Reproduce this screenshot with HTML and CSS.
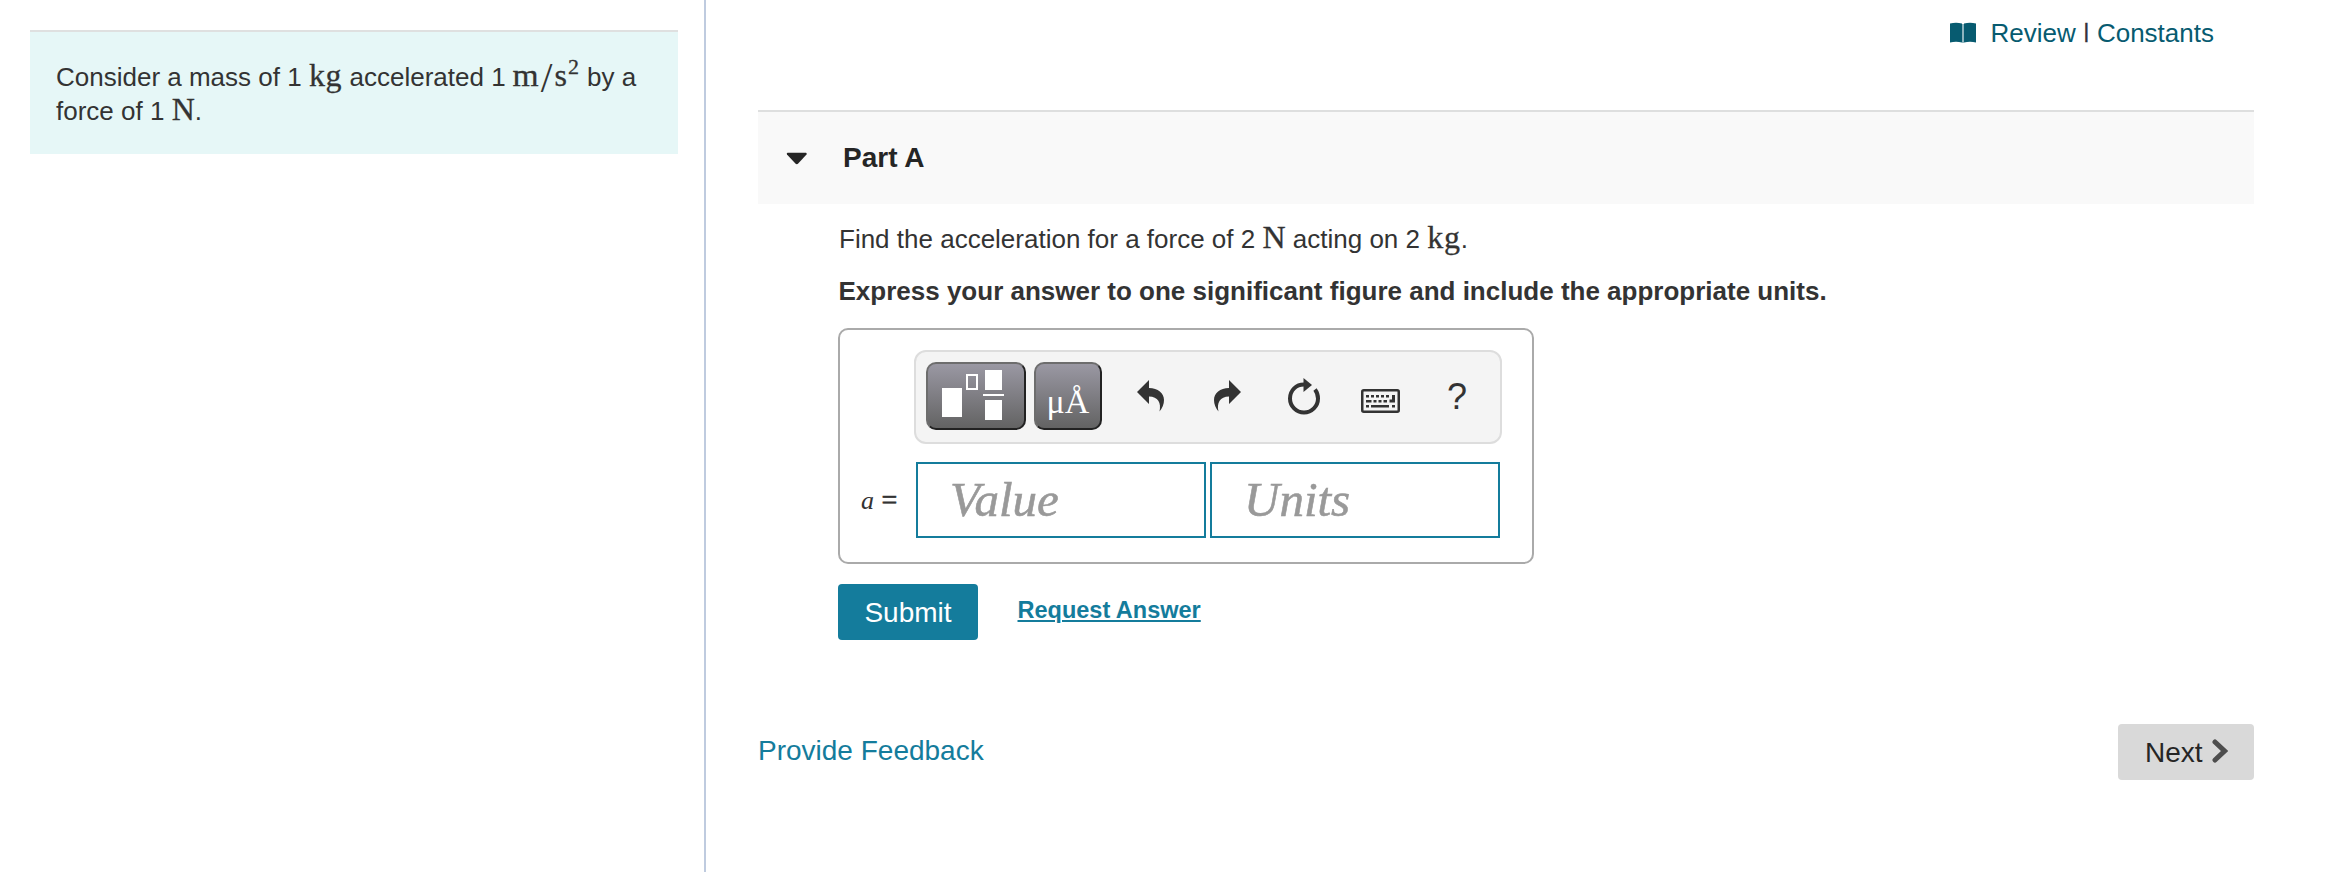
FILE: index.html
```html
<!DOCTYPE html>
<html lang="en">
<head>
<meta charset="utf-8">
<title>Part A</title>
<link rel="stylesheet" href="styles.css">
</head>
<body>
<div class="page">
  <aside class="side">
    <p class="intro">Consider a mass of 1 <span class="math kg">kg</span> accelerated 1 <span class="math ms"><span class="m">m</span><span class="slash">/</span>s<sup>2</sup></span> by a<br>force of 1 <span class="math">N</span>.</p>
  </aside>
  <main class="main">
    <nav class="links">
      <svg class="book" width="26" height="22" viewBox="0 0 26 22"><path fill="#075b70" d="M0 1.500Q6 0 12 1.500V20.500Q6 19 0 20.500ZM14 1.500Q20 0 26 1.500V20.500Q20 19 14 20.500Z"/><path fill="#8db4be" d="M12 2h2v19h-2z"/></svg>
      <a>Review</a><span class="bar">|</span><a>Constants</a>
    </nav>
    <header class="part">
      <svg class="caret" width="22" height="13" viewBox="0 0 22 13"><path fill="#252525" d="M1.500 .7h18.500q1.300 .5 .5 1.700l-8.300 9.200q-1.400 1.300-2.800 0L1 2.400Q.2 1.200 1.500 .7Z"/></svg>
      <h2>Part A</h2>
    </header>
    <section class="body">
      <p class="question">Find the acceleration for a force of 2 <span class="math">N</span> acting on 2 <span class="math kg">kg</span>.</p>
      <p class="instruction">Express your answer to one significant figure and include the appropriate units.</p>
      <div class="answer">
        <div class="toolbar">
          <button class="tool templates"><svg width="66" height="52" viewBox="0 0 66 52"><path fill="#fff" d="M2 19h20v29H2zM45 1h17v20H45zM43 25h21v2H43zM45 31h17v20H45z"/><path fill="none" stroke="#fff" stroke-width="2" d="M27 6h10v14H27z"/></svg></button>
          <button class="tool units">μÅ</button>
          <svg class="icon undo" width="28" height="32" viewBox="0 0 28 32"><path fill="#333" d="M0 12 12 0V8C21 8 27 13 27 20Q27 26 22.500 31.500C24.500 23 21 16.500 12 16.500V24Z"/></svg>
          <svg class="icon redo" width="28" height="32" viewBox="0 0 28 32"><path fill="#333" d="M27 12 15 0V8C6 8 0 13 0 20Q0 26 4.500 31.500C2.500 23 6 16.500 15 16.500V24Z"/></svg>
          <svg class="icon reset" width="32" height="37" viewBox="0 0 32 37"><path fill="none" stroke="#333" stroke-width="4" d="M17 6.500C8 6 2 12.500 2 20.500A14 14 0 0 0 30 20.500Q30 15.500 27 11.500"/><path fill="#333" d="M15.500 0 24 7 15.500 14Z"/></svg>
          <svg class="icon keyboard" width="39" height="24" viewBox="0 0 39 24"><rect x="1.250" y="1.250" width="36.500" height="21.500" rx="1.500" fill="none" stroke="#333" stroke-width="2.500"/><path fill="#333" d="M5 6h3v2.500H5zM10 6h3v2.500h-3zM15 6h3v2.500h-3zM20 6h3v2.500h-3zM25 6h3v2.500h-3zM31 6h3v7.500h-5.500v-3H31zM5 11h5.500v2.500H5zM12.500 11h3v2.500h-3zM17.500 11h3v2.500h-3zM22.500 11h3.500v2.500h-3.500zM5 16h3v2.500H5zM10 16h18v2.500H10zM31 16h3v2.500h-3z"/></svg>
          <span class="help">?</span>
        </div>
        <div class="row">
          <label><i>a</i> <span class="eq">=</span></label>
          <div class="field">Value</div>
          <div class="field">Units</div>
        </div>
      </div>
      <div class="actions">
        <button class="submit">Submit</button>
        <a class="request">Request Answer</a>
      </div>
    </section>
    <footer class="footer">
      <a>Provide Feedback</a>
      <button class="next">Next<svg width="16" height="24" viewBox="0 0 16 24"><path fill="none" stroke="#4d4d4d" stroke-width="5" stroke-linecap="round" d="M3 3 12.500 12 3 21"/></svg></button>
    </footer>
  </main>
</div>
</body>
</html>
```
FILE: styles.css
```css
* { box-sizing: border-box; }
body { margin: 0; background: #fff; color: #333; font: 26px/34px "Liberation Sans", Arial, sans-serif; }
p, h2 { margin: 0; }
button { border: 0; padding: 0; font: inherit; }
.page { display: flex; height: 872px; overflow: hidden; }
.side { width: 706px; padding: 30px 26px 0 30px; border-right: 2px solid #bfcbdf; }
.intro { height: 124px; padding: 28px 26px 0; border-top: 2px solid #dfe0e0; background: #e6f7f7; white-space: nowrap; }
.math { font-family: "Liberation Serif", "Times New Roman", serif; font-size: 32px; line-height: 0; -webkit-text-stroke: .3px; }
.kg { letter-spacing: .7px; }
.m { display: inline-block; transform: scaleX(1.05); }
.slash { font-size: 42px; position: relative; top: 6px; margin: 0 2px 0 3px; -webkit-text-stroke: 0; }
.math sup { font-size: 22px; line-height: 0; vertical-align: 12px; margin: 0 1px; }
.main { flex: 1; padding: 0 76px 0 52px; }
.links { height: 110px; padding: 16px 40px 0 0; display: flex; justify-content: flex-end; align-items: flex-start; color: #075b70; }
.book { margin: 6px 14px 0 0; }
.bar { color: #333; font-size: 20px; line-height: 31px; margin: 0 8px; -webkit-text-stroke: .6px; }
.part { height: 94px; border-top: 2px solid #dedfdf; background: #f9f9f9; display: flex; align-items: center; padding-left: 28px; color: #252525; }
.caret { margin-right: 35px; }
.part h2 { font-size: 28px; line-height: 34px; }
.body { padding: 18px 0 0 80px; }
.question { padding-left: 1px; }
.instruction { font-weight: bold; margin-top: 18px; padding-left: .5px; }
.answer { width: 696px; height: 236px; margin-top: 20px; border: 2px solid #aaa; border-radius: 10px; padding: 20px 0 0 20px; }
.toolbar { width: 588px; height: 94px; margin-left: 54px; border: 2px solid #ddd; border-radius: 12px; background: #f4f4f4; display: flex; padding: 10px; align-items: flex-start; }
.tool { height: 68px; border: 2px solid; border-color: #6d6d6d #222 #222 #6d6d6d; border-radius: 10px; background: linear-gradient(#9a98a3, #636363); color: #fff; }
.templates { width: 100px; margin-right: 8px; padding: 5px 0 0 12px; display: flex; align-items: flex-start; }
.units { width: 68px; font: 34px/76px "Liberation Serif", serif; }
.icon { flex: none; }
.undo { margin: 18px 0 0 35px; }
.redo { margin: 18px 0 0 49px; }
.reset { margin: 16px 0 0 46px; }
.keyboard { margin: 27px 0 0 41px; }
.help { margin: 10px 0 0 47px; font-size: 36px; line-height: 50px; }
.row { display: flex; margin-top: 18px; gap: 4px; }
.row label { width: 52px; height: 76px; padding-left: 1px; white-space: nowrap; font-family: "Liberation Serif", serif; line-height: 78px; }
.eq { font-size: 28px; line-height: 0; margin-left: 1px; -webkit-text-stroke: .6px; }
.field { width: 290px; height: 76px; border: 2px solid #147c9c; padding-left: 32px; color: #999; font: italic 49px/72px "Liberation Serif", serif; -webkit-text-stroke: .6px; }
.actions { display: flex; margin-top: 20px; }
.submit { width: 140px; height: 56px; padding-top: 1px; border-radius: 4px; background: #147c9c; color: #fff; font-size: 28px; }
.request { margin: 9px 0 0 39.500px; color: #147c9c; font-weight: bold; font-size: 23.500px; text-decoration: underline; text-decoration-thickness: 2px; text-underline-offset: 2px; }
.footer { display: flex; justify-content: space-between; margin-top: 84px; font-size: 28px; color: #147c9c; }
.footer a { line-height: 54px; }
.next { width: 136px; height: 56px; border-radius: 4px; background: #d9d9d9; color: #252525; display: flex; align-items: center; padding: 1px 0 0 27px; }
.next svg { margin: -3px 0 0 9px; }
```
